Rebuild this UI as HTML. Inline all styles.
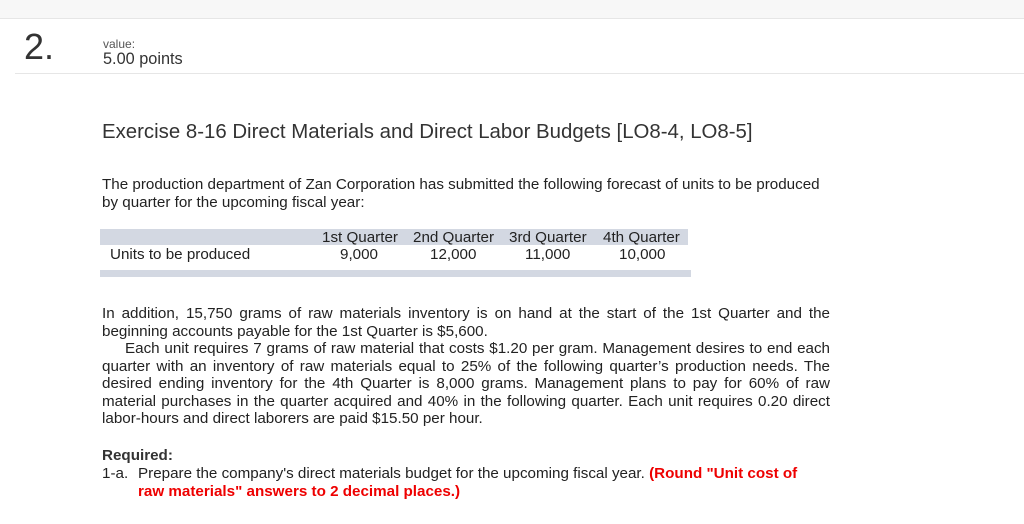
<html><head><style>
body{margin:0;width:1024px;height:524px;background:#fff;position:relative;font-family:"Liberation Sans",Arial,sans-serif;color:#222;overflow:hidden}
.a{position:absolute}
p{margin:0}
.t{font-size:15.2px}
</style></head><body>
<div class="a" style="left:0;top:0;width:1024px;height:18px;background:#f7f7f7;border-bottom:1px solid #e6e6e6"></div>
<div class="a" style="left:24px;top:26px;font-size:36px;color:#333">2.</div>
<div class="a" style="left:103px;top:37px;font-size:12px;color:#555">value:</div>
<div class="a" style="left:103px;top:50px;font-size:16.3px;color:#333">5.00 points</div>
<div class="a" style="left:15px;top:73px;width:1009px;height:1px;background:#e6e6e6"></div>
<div class="a" style="left:102px;top:121px;font-size:20.4px;color:#333">Exercise 8-16 Direct Materials and Direct Labor Budgets [LO8-4, LO8-5]</div>
<div class="a t" style="left:102px;top:176px;width:730px;line-height:17.5px">The production department of Zan Corporation has submitted the following forecast of units to be produced by quarter for the upcoming fiscal year:</div>
<div class="a" style="left:100px;top:229px;width:588px;height:16px;background:#d3d8e2"></div>
<div class="a" style="left:100px;top:270px;width:591px;height:7px;background:#d3d8e2"></div>
<div class="a t" style="left:322px;top:229px">1st Quarter</div>
<div class="a t" style="left:413px;top:229px">2nd Quarter</div>
<div class="a t" style="left:509px;top:229px">3rd Quarter</div>
<div class="a t" style="left:603px;top:229px">4th Quarter</div>
<div class="a t" style="left:110px;top:246px">Units to be produced</div>
<div class="a t" style="left:340px;top:246px">9,000</div>
<div class="a t" style="left:430px;top:246px">12,000</div>
<div class="a t" style="left:525px;top:246px">11,000</div>
<div class="a t" style="left:619px;top:246px">10,000</div>
<div class="a t" style="left:102px;top:305px;width:728px;line-height:17.5px;text-align:justify">
<p>In addition, 15,750 grams of raw materials inventory is on hand at the start of the 1st Quarter and the beginning accounts payable for the 1st Quarter is $5,600.</p>
<p style="text-indent:23px">Each unit requires 7 grams of raw material that costs $1.20 per gram. Management desires to end each quarter with an inventory of raw materials equal to 25% of the following quarter’s production needs. The desired ending inventory for the 4th Quarter is 8,000 grams. Management plans to pay for 60% of raw material purchases in the quarter acquired and 40% in the following quarter. Each unit requires 0.20 direct labor-hours and direct laborers are paid $15.50 per hour.</p>
</div>
<div class="a t" style="left:102px;top:447px;font-weight:bold;color:#333">Required:</div>
<div class="a t" style="left:102px;top:465px">1-a.</div>
<div class="a t" style="left:138px;top:465px;width:670px;line-height:17.5px">Prepare the company's direct materials budget for the upcoming fiscal year. <b style="color:#e00">(Round "Unit cost of raw materials" answers to 2 decimal places.)</b></div>
</body></html>
